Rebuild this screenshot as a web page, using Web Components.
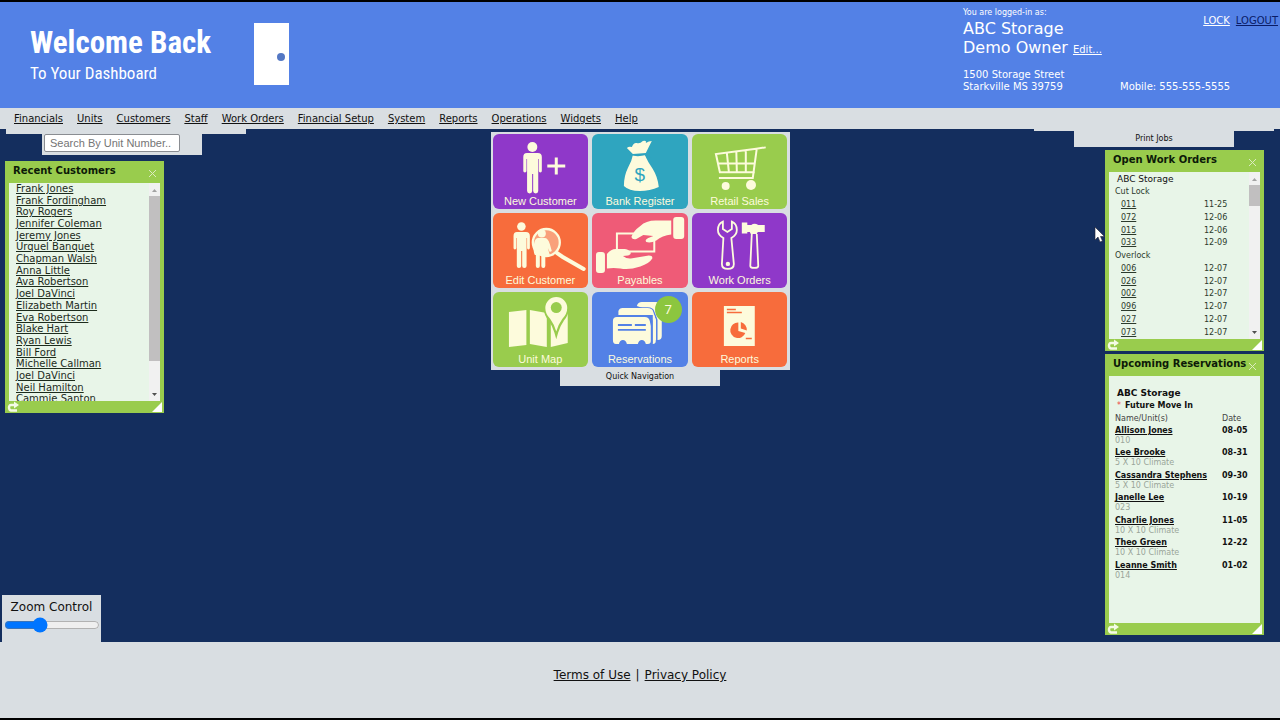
<!DOCTYPE html>
<html lang="en">
<head>
<meta charset="utf-8">
<title>Dashboard</title>
<style>
    :root {
        --blue: #5381e6;
        --grey: #d9dee2;
        --navy: #142e5e;
        --green: #99cc4d;
        --mint: #e8f5e8;
    }
    body {
        margin: 0;
        font: 10px "DejaVu Sans", Verdana, sans-serif;
        color: #111;
        background: #000;
    }
</style>
</head>
<body>
<dash-app></dash-app>

<script>
(function () {
    function define(name, html, setup) {
        const tmpl = document.createElement('template');
        tmpl.innerHTML = html;
        customElements.define(name, class extends HTMLElement {
            constructor() {
                super();
                this.attachShadow({mode: 'open'}).appendChild(tmpl.content.cloneNode(true));
            }

            connectedCallback() {
                if (setup) setup.call(this, this.shadowRoot);
            }
        });
    }

    // Header

    define('dash-header', `
        <style>
            :host {
                display: flex;
                justify-content: space-between;
                height: 106px;
                background: var(--blue);
                color: #fff;
            }
            a { color: inherit; }
            .welcome { display: flex; gap: 43px; padding: 21px 0 0 30px; }
            h1, p {
                margin: 0;
                font-family: "Roboto Condensed", "Liberation Sans Narrow", "Liberation Sans", sans-serif;
            }
            h1 { font-size: 31px; line-height: 40px; }
            p { font-size: 17px; line-height: 20px; }
            .user { display: flex; justify-content: space-between; width: 317px; padding-top: 5px; }
            .as { font-size: 8px; line-height: 12px; }
            .name { font-size: 16px; line-height: 19px; }
            .name a { font-size: 10px; }
            .address { margin-top: 10px; line-height: 12px; }
            .side {
                display: flex;
                flex-direction: column;
                justify-content: space-between;
                width: 160px;
                height: 86px;
                line-height: 12px;
            }
            .links { display: flex; justify-content: flex-end; gap: 6px; padding: 8px 2px 0 0; }
            .out { color: #0a1c66; }
        </style>
        <div class="welcome">
            <div>
                <h1>Welcome Back</h1>
                <p>To Your Dashboard</p>
            </div>
            <svg width="35" height="62" viewBox="0 0 35 62" aria-hidden="true">
                <path fill="#fff" d="M0 0h35v62H0z"/>
                <circle cx="27" cy="34" r="4" fill="#5478c4"/>
            </svg>
        </div>
        <div class="user">
            <div>
                <div class="as">You are logged-in as:</div>
                <div class="name">ABC Storage</div>
                <div class="name">Demo Owner <a href="#">Edit...</a></div>
                <div class="address">1500 Storage Street<br>Starkville MS 39759</div>
            </div>
            <div class="side">
                <div class="links"><a href="#">LOCK</a><a href="#" class="out">LOGOUT</a></div>
                <div>Mobile: 555-555-5555</div>
            </div>
        </div>
    `);

    define('dash-nav', `
        <style>
            :host { display: block; background: var(--grey); }
            nav { display: flex; gap: 14px; padding: 1px 14px 0; }
            ::slotted(a) { line-height: 20px; color: #111; }
        </style>
        <nav><slot></slot></nav>
    `);

    // Widget window with a title bar and a resize footer

    define('scroll-bar', `
        <style>
            :host {
                display: flex;
                flex-direction: column;
                flex: none;
                width: 11px;
                background: #f1f1f1;
            }
            svg { flex: none; width: 11px; height: 13px; }
            .thumb { height: var(--thumb, 60px); background: #c1bfc0; }
            .down { margin-top: auto; }
        </style>
        <svg viewBox="0 0 11 13"><path fill="#a3a3a3" d="M3 9l2.500-3 2.500 3z"/></svg>
        <div class="thumb"></div>
        <svg class="down" viewBox="0 0 11 13"><path fill="#505050" d="M3 5l2.500 3 2.500-3z"/></svg>
    `);

    define('dash-panel', `
        <style>
            :host {
                display: block;
                box-sizing: border-box;
                width: 159px;
                padding: 0 4px;
                background: var(--green);
            }
            header {
                display: flex;
                justify-content: space-between;
                height: 22px;
                padding: 0 3px 0 4px;
            }
            h2 { margin: 0; font-size: 10px; line-height: 20px; color: #0c1a08; white-space: nowrap; }
            button { padding: 2px 0 0; border: 0; background: none; }
            button svg { display: block; }
            .body {
                display: flex;
                justify-content: space-between;
                height: var(--body-height);
                overflow: hidden;
                background: var(--mint);
            }
            .content { flex: 1; }
            footer { display: flex; justify-content: space-between; height: 12px; margin: 0 -2px; }
        </style>
        <header>
            <h2></h2>
            <button aria-label="Close">
                <svg width="9" height="9" viewBox="0 0 9 9"><path stroke="#dcebc0" d="M1 1l7 7M8 1l-7 7"/></svg>
            </button>
        </header>
        <div class="body"><div class="content"><slot></slot></div></div>
        <footer>
            <svg width="12" height="12" viewBox="0 0 12 12">
                <path fill="none" stroke="#f4fbe6" stroke-width="2.400" d="M8 4H4Q2 4 2 6.500T4 9.500h6"/>
                <path fill="#f4fbe6" d="M7 .5l5 3.500-5 3.500z"/>
            </svg>
            <svg width="10" height="12" viewBox="0 0 10 12"><path fill="#fff" d="M10 1v10H0z"/></svg>
        </footer>
    `, function (root) {
        root.querySelector('h2').textContent = this.getAttribute('heading');
        if (this.hasAttribute('scroll')) {
            root.querySelector('.body').appendChild(document.createElement('scroll-bar'));
        }
    });

    define('recent-customers', `
        <style>
            :host { display: block; }
            ul {
                display: grid;
                grid-auto-rows: minmax(0, 1fr);
                height: 222px;
                margin: 0;
                padding: 0 0 0 7px;
                list-style: none;
            }
            li { line-height: 12px; white-space: nowrap; }
            a { color: #1c2b1c; }
        </style>
        <ul></ul>
    `, function (root) {
        const names = ['Frank Jones', 'Frank Fordingham', 'Roy Rogers', 'Jennifer Coleman', 'Jeremy Jones',
            'Urquel Banquet', 'Chapman Walsh', 'Anna Little', 'Ava Robertson', 'Joel DaVinci',
            'Elizabeth Martin', 'Eva Robertson', 'Blake Hart', 'Ryan Lewis', 'Bill Ford',
            'Michelle Callman', 'Joel DaVinci', 'Neil Hamilton', 'Cammie Santon'];
        root.querySelector('ul').innerHTML = names.map(n => `<li><a href="#">${n}</a></li>`).join('');
    });

    define('work-orders', `
        <style>
            :host { display: block; color: #2c3a2c; }
            h3 { margin: 0; padding-left: 8px; font-size: 9px; font-weight: normal; line-height: 14px; color: #111; }
            table { width: 100%; height: 153px; border-collapse: collapse; font-size: 8px; line-height: 12px; }
            th { padding: 0 0 0 6px; font-weight: normal; text-align: left; }
            td { padding: 0; }
            td:first-child { width: 83px; padding-left: 12px; }
            a { color: inherit; }
        </style>
        <h3>ABC Storage</h3>
        <table></table>
    `, function (root) {
        const groups = {
            'Cut Lock': [['011', '11-25'], ['072', '12-06'], ['015', '12-06'], ['033', '12-09']],
            'Overlock': [['006', '12-07'], ['026', '12-07'], ['002', '12-07'], ['096', '12-07'],
                ['027', '12-07'], ['073', '12-07']]
        };
        root.querySelector('table').innerHTML = Object.keys(groups).map(g =>
            `<tr><th colspan="2">${g}</th></tr>` +
            groups[g].map(r => `<tr><td><a href="#">${r[0]}</a></td><td>${r[1]}</td></tr>`).join('')
        ).join('');
    });

    define('upcoming-reservations', `
        <style>
            :host { display: block; padding: 11px 6px 0; }
            h3 { margin: 0; padding-left: 2px; font-size: 9px; line-height: 13px; }
            p { margin: 0; padding-left: 2px; font-size: 8px; font-weight: bold; line-height: 12px; }
            p span { margin-right: 4px; color: #e44; font-weight: normal; }
            table { width: 100%; height: 170px; border-collapse: collapse; font-size: 8px; }
            th, td { padding: 0; text-align: left; vertical-align: top; }
            th { font-weight: normal; line-height: 13px; color: #444; }
            td { font-weight: bold; line-height: 12px; white-space: nowrap; }
            th:first-child { width: 107px; }
            a { color: #111; }
            small { display: block; font-size: 8px; font-weight: normal; line-height: 8px; color: #9aa59a; }
        </style>
        <h3>ABC Storage</h3>
        <p><span>*</span>Future Move In</p>
        <table>
            <thead><tr><th>Name/Unit(s)</th><th>Date</th></tr></thead>
            <tbody></tbody>
        </table>
    `, function (root) {
        const rows = [
            ['Allison Jones', '010', '08-05'],
            ['Lee Brooke', '5 X 10 Climate', '08-31'],
            ['Cassandra Stephens', '5 X 10 Climate', '09-30'],
            ['Janelle Lee', '023', '10-19'],
            ['Charlie Jones', '10 X 10 Climate', '11-05'],
            ['Theo Green', '10 X 10 Climate', '12-22'],
            ['Leanne Smith', '014', '01-02']
        ];
        root.querySelector('tbody').innerHTML = rows.map(r =>
            `<tr><td><a href="#">${r[0]}</a><small>${r[1]}</small></td><td>${r[2]}</td></tr>`).join('');
    });

    // Quick navigation

    const icons = {
        person: `
            <circle cx="39.500" cy="13" r="5"/>
            <path d="M34 19h11q4 0 4 4v14q0 1.500-1.500 1.500T46 37V25h-.6v32q0 2.500-2.500 2.500T40.300 57V40h-1v17q0 2.500-2.500 2.500T34.200 57V25h-.6v12q0 1.500-1.600 1.500T30.400 37V23q0-4 3.600-4z"/>
            <path d="M62 23.500h3v7h7.500v3H65v7h-3v-7h-7.500v-3H62z"/>`,
        bag: `
            <path d="M41 20l-6-6q2-2 5-1 2-5 5-4 3 1 6-2 4-1 3 2 3-2 6-2-3 6-6 12z"/>
            <path d="M41 21h12q3 7 8 14 5 8 6 18-9 4-19 4-11 0-16-5 0-10 4-18 4-7 5-13z"/>
            <path class="cut" stroke-width="1.200" d="M38 20.500q8 2 16 0l5 3M54 20l2 5"/>
            <text x="48" y="47" font-size="19" text-anchor="middle">$</text>`,
        cart: `
            <path class="line" stroke-width="2" d="M74 13.300l-9.500 1.400L24 20l4 18.300h35M65 14.500L61 44H27M26 29.500h37M35 19l2 19M44.500 18l.5 20M54 16.500V38"/>
            <circle cx="33.800" cy="52" r="4"/>
            <circle cx="59.200" cy="51" r="5"/>`,
        search: `
            <circle cx="28.500" cy="13.500" r="4.300"/>
            <path d="M24 19h9q4 0 4 4v12q0 1.500-1.400 1.500T34.200 35V25h-.5v28q0 2-2.200 2t-2.200-2V38h-1v15q0 2-2.200 2t-2.200-2V25h-.5v10q0 1.500-1.400 1.500T20.600 35V23q0-4 3.400-4z"/>
            <path d="M43 38h4v15q0 2-2 2t-2-2zM48.500 38h4v15q0 2-2 2t-2-2z"/>
            <circle cx="53" cy="29.500" r="13" fill="#f9a07a"/>
            <circle cx="49" cy="20.500" r="4"/>
            <path d="M45 25h7q3 0 5 6l2 7-2 1-2-4 2 7H42q-2-4-1-10 1-7 4-7z"/>
            <circle class="line" cx="53.500" cy="29.500" r="13.500" stroke-width="2.400"/>
            <path class="line" stroke-width="4" stroke-linecap="round" d="M64 40l6 4 21 12"/>`,
        pay: `
            <rect x="81.500" y="4" width="11" height="22" rx="3"/>
            <path class="line" stroke-width="2" d="M44 20.500H25v18h37.500V28"/>
            <path d="M79.500 7.500v14q-9 1-15 6-6 3-10 1.500-2-2 2-4l5-2-10-1-7 4q-4 1-5-2 2-6 9-11 6-6 17-5.500z"/>
            <rect x="4" y="39" width="9" height="21" rx="3"/>
            <path d="M15 41q4-5 9-5h9q5 1 6 4 0 2-3 2.500l-5 .5q4 3 8 2.500l18-3q4 0 3.500 3-3 5-12 8-12 4-20 2-7-1-13.500 0z"/>`,
        tools: `
            <path class="line" stroke-width="1.800" d="M31 8.500q-5 2-5 8.500 0 5 5.500 8L30 51q0 5 6 5t6-5l-2.500-26q5.500-3 5.500-8 0-6.500-5-8.500v7.500l-4.500 3-4.500-3z"/>
            <circle cx="36" cy="51" r="2.200"/>
            <path d="M50 9.500h5.500V12h4q3-2.500 7 0H73v7h-7l-1 2h-6l-1-2h-2.500v1.500H50z"/>
            <path class="line" stroke-width="1.800" d="M60 21l-1.500 32q0 2 4 2t4-2L65 21"/>`,
        map: `
            <path d="M16 20l17.500-2v35L16 55zM37 18l17 3v34l-17-3zM58 21l17-4v34l-17 4z"/>
            <path class="cut" fill="#99cc4d" stroke-width="4" d="M63.500 40q-2-7-6-12.500-4.500-5-4.500-11a10.500 10.500 0 0 1 21 0q0 6-4.500 11-4 5.500-6 12.500z"/>
            <path d="M63.500 39.500q-2-7-6-12.500-5-5-5-11a11 11 0 0 1 22 0q0 6-5 11-4 5.500-6 12.500z"/>
            <circle cx="63.500" cy="15.500" r="5.500" fill="#99cc4d"/>`,
        tickets: `
            <path d="M45 14q1-4 5-4h14q3 0 4 3l2 9v22q0 4-4 4h-4V20z"/>
            <path class="cut" stroke-width="1.500" d="M26 24v-5q1-3 4-3h26q5 0 6 4l3 8v22"/>
            <path d="M26.500 23v-4q1-3 4-3h25q5 0 6 4l2.500 8v21q0 3-3 3V23z"/>
            <path class="cut" stroke-width="1.500" d="M24 24h30q5 0 6 5v22"/>
            <path d="M25 25h28q4 0 5 4l1 5v15q0 3-3 3h-2q-1-4-4-4t-4 4H35q-1-4-4-4t-4 4h-3q-3 0-3-4V29q0-4 4-4z"/>
            <path class="cut" stroke-width="1.800" d="M26 33h14M43 33h11M26 38h28"/>`,
        report: `
            <path d="M32 14h31v40H32z"/>
            <path class="cut" stroke-width="1.500" d="M35 17.500h9M35 20.500h15M54 46.500h6"/>
            <path fill="#f76c3c" d="M46.500 30.500a7.800 7.800 0 1 0 7 10.500l-7-2zM49 30a8 8 0 0 1 6 8.500l-6-2z"/>`
    };

    define('nav-tile', `
        <style>
            :host { display: block; }
            a {
                position: relative;
                display: flex;
                flex-direction: column;
                height: 100%;
                border-radius: 6px;
                background: var(--tile);
                color: #fdfbdc;
                font: 11px "Liberation Sans", Arial, sans-serif;
                text-align: center;
                text-decoration: none;
            }
            svg { display: block; width: 100%; height: 61px; fill: #fdfbdc; }
            .line { fill: none; stroke: #fdfbdc; }
            .cut { fill: none; stroke: var(--tile); }
            text { fill: var(--tile); }
            span { line-height: 12px; }
            b {
                position: absolute;
                top: 4px;
                right: 6px;
                width: 27px;
                border-radius: 50%;
                background: #8cc63f;
                font: 13px/27px "Noto Sans", sans-serif;
            }
            b:empty { display: none; }
        </style>
        <a href="#">
            <svg viewBox="0 0 96 61" aria-hidden="true"></svg>
            <span><slot></slot></span>
            <b></b>
        </a>
    `, function (root) {
        this.style.setProperty('--tile', this.getAttribute('color'));
        root.querySelector('svg').innerHTML = icons[this.getAttribute('icon')];
        root.querySelector('b').textContent = this.getAttribute('count') || '';
    });

    define('quick-nav', `
        <style>
            :host { display: flex; flex-direction: column; align-items: center; width: 299px; padding-top: 3px; }
            .tiles {
                box-sizing: border-box;
                display: grid;
                grid-template-columns: repeat(3, 1fr);
                grid-auto-rows: 75px;
                gap: 4px;
                width: 100%;
                padding: 2px 2px 3px;
                background: var(--grey);
            }
            .tab {
                width: 160px;
                padding-bottom: 3px;
                background: var(--grey);
                font-size: 8px;
                line-height: 13px;
                text-align: center;
            }
        </style>
        <div class="tiles">
            <nav-tile icon="person" color="#8f38c9">New Customer</nav-tile>
            <nav-tile icon="bag" color="#2fa5bf">Bank Register</nav-tile>
            <nav-tile icon="cart" color="#99cc4d">Retail Sales</nav-tile>
            <nav-tile icon="search" color="#f76c3c">Edit Customer</nav-tile>
            <nav-tile icon="pay" color="#ef5b77">Payables</nav-tile>
            <nav-tile icon="tools" color="#8f38c9">Work Orders</nav-tile>
            <nav-tile icon="map" color="#99cc4d">Unit Map</nav-tile>
            <nav-tile icon="tickets" color="#5381e6" count="7">Reservations</nav-tile>
            <nav-tile icon="report" color="#f76c3c">Reports</nav-tile>
        </div>
        <div class="tab">Quick Navigation</div>
    `);

    define('zoom-control', `
        <style>
            :host { display: block; width: 99px; height: 47px; background: var(--grey); }
            label { display: block; font-size: 12px; line-height: 24px; text-align: center; }
            input { display: block; width: 96px; height: 12px; margin: 0 2px; }
        </style>
        <label for="zoom">Zoom Control</label>
        <input id="zoom" type="range" min="0" max="100" value="35">
    `);

    define('dash-footer', `
        <style>
            :host {
                display: flex;
                justify-content: center;
                gap: 5px;
                padding: 25px 0 35px;
                background: var(--grey);
                font-size: 12px;
                line-height: 16px;
            }
            a { color: #111; }
        </style>
        <a href="#">Terms of Use</a><span>|</span><a href="#">Privacy Policy</a>
    `);

    define('dash-app', `
        <style>
            :host {
                display: flex;
                flex-direction: column;
                box-sizing: border-box;
                min-height: 100vh;
                border: solid #000;
                border-width: 2px 0;
            }
            main {
                position: relative;
                flex: 1;
                display: grid;
                grid-template-columns: 1fr auto 1fr;
                background: var(--navy);
            }
            .left, .right { display: flex; flex-direction: column; }
            .right { align-items: flex-end; }
            .strip { width: 240px; background: var(--grey); }
            .left .strip { height: 5px; margin-left: 6px; }
            .right .strip { height: 2px; margin-right: 6px; }
            .search {
                box-sizing: border-box;
                width: 160px;
                height: 21px;
                margin: 0 0 6px 42px;
                padding: 0 2px;
                background: var(--grey);
            }
            .search input {
                box-sizing: border-box;
                display: block;
                width: 136px;
                height: 18px;
                padding: 0 5px;
                border: 1px solid #8a8d92;
                border-radius: 2px;
                font: 11px "Liberation Sans", Arial, sans-serif;
            }
            .jobs {
                width: 160px;
                margin: 0 46px 3px 0;
                background: var(--grey);
                font-size: 8px;
                line-height: 16px;
                text-align: center;
            }
            .left dash-panel { margin-left: 5px; }
            .right dash-panel { margin: 0 16px 3px 0; }
            .recent { --body-height: 218px; --thumb: 165px; }
            .orders { --body-height: 167px; --thumb: 21px; }
            .upcoming { --body-height: 247px; }
            zoom-control { margin: auto 0 0 2px; }
            .pointer { position: absolute; top: 97px; right: 175px; }
        </style>
        <dash-header></dash-header>
        <dash-nav>
            <a href="#">Financials</a>
            <a href="#">Units</a>
            <a href="#">Customers</a>
            <a href="#">Staff</a>
            <a href="#">Work Orders</a>
            <a href="#">Financial Setup</a>
            <a href="#">System</a>
            <a href="#">Reports</a>
            <a href="#">Operations</a>
            <a href="#">Widgets</a>
            <a href="#">Help</a>
        </dash-nav>
        <main>
            <div class="left">
                <div class="strip"></div>
                <div class="search"><input type="text" aria-label="Search by unit number" placeholder="Search By Unit Number.."></div>
                <dash-panel class="recent" heading="Recent Customers" scroll>
                    <recent-customers></recent-customers>
                </dash-panel>
                <zoom-control></zoom-control>
            </div>
            <quick-nav></quick-nav>
            <div class="right">
                <div class="strip"></div>
                <div class="jobs">Print Jobs</div>
                <dash-panel class="orders" heading="Open Work Orders" scroll>
                    <work-orders></work-orders>
                </dash-panel>
                <dash-panel class="upcoming" heading="Upcoming Reservations">
                    <upcoming-reservations></upcoming-reservations>
                </dash-panel>
            </div>
            <svg class="pointer" width="11" height="17" viewBox="0 0 11 17">
                <path fill="#fff" stroke="#223" stroke-width=".6" d="M1 1v13l3-3 2 5 2.500-1-2-4.500h4z"/>
            </svg>
        </main>
        <dash-footer></dash-footer>
    `);
})();
</script>
</body>
</html>
